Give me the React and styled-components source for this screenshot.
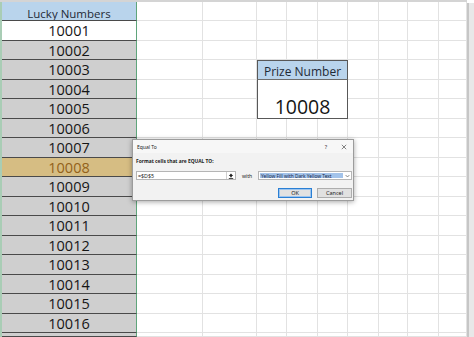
import React from "react";
import styled, { createGlobalStyle } from "styled-components";

const GlobalStyle = createGlobalStyle`
  html, body {
    margin: 0;
    padding: 0;
    background: #ffffff;
    overflow: hidden;
  }
  #root {
    width: 474px;
    height: 337px;
  }
`;

// strip, A, B ... J
const COLUMN_WIDTHS = [2, 135, 66, 54, 30, 31, 30, 31, 29, 31, 28];
const luckyNumbers = Array.from({ length: 16 }, (_, i) => 10001 + i);
const WINNER = 10008;

const Screen = styled.div`
  position: relative;
  display: flex;
  width: 474px;
  height: 337px;
  overflow: hidden;
  font-family: "Open Sans", "Liberation Sans", Arial, sans-serif;
  color: #1c1c1c;
`;

const Sheet = styled.div`
  flex: 1;
  display: grid;
  grid-template-columns: ${COLUMN_WIDTHS.map((w) => `${w}px`).join(" ")};
  grid-template-rows: 2px 19px repeat(16, 19.5px) 1fr;
`;

const TopStrip = styled.div`
  grid-column: 1 / -1;
  grid-row: 1;
  background: #d4d4d4;
`;

const SelectionEdge = styled.div`
  grid-column: 1;
  grid-row: 2 / -1;
  background: #a9cdb5;
`;

const tones = {
  header: { bg: "#b9d4ec", fg: "#1f2a36", size: "11.5px", pad: "0.5px" },
  white: { bg: "#ffffff", fg: "#161616", size: "14.5px", pad: "1px" },
  gray: { bg: "#cfcfcf", fg: "#161616", size: "14.5px", pad: "1px" },
  match: { bg: "#d6bd83", fg: "#93621a", size: "14.5px", pad: "1px" },
};

const ListCell = styled.div`
  box-sizing: border-box;
  display: flex;
  align-items: flex-end;
  justify-content: center;
  padding-bottom: ${(p) => tones[p.$tone].pad};
  background: ${(p) => tones[p.$tone].bg};
  color: ${(p) => tones[p.$tone].fg};
  font-size: ${(p) => tones[p.$tone].size};
  line-height: ${(p) => tones[p.$tone].size};
  font-weight: 500;
  border-bottom: 1px solid #4a4a4a;
  border-right: 1px solid #5fa57b;
  overflow: hidden;
`;

const EmptyCell = styled.div`
  box-sizing: border-box;
  border-right: 1px solid #e2e2e2;
  border-bottom: 1px solid #e2e2e2;
`;

const PrizeHead = styled.div`
  grid-column: 5 / 8;
  grid-row: 5;
  box-sizing: border-box;
  display: flex;
  align-items: flex-end;
  justify-content: center;
  padding-bottom: 1px;
  background: #b9d4ec;
  border: 1px solid #585858;
  border-bottom-color: #6d6d6d;
  font-size: 12px;
  line-height: 13px;
  font-weight: 500;
  color: #1f2a36;
`;

const PrizeValue = styled.div`
  grid-column: 5 / 8;
  grid-row: 6 / 8;
  box-sizing: border-box;
  display: flex;
  align-items: flex-end;
  justify-content: center;
  padding-bottom: 1px;
  background: #ffffff;
  border: 1px solid #585858;
  border-top: none;
  font-size: 19.5px;
  line-height: 20px;
  font-weight: 500;
  color: #151515;
`;

const Scrollbar = styled.div`
  width: 7px;
  margin-top: 3px;
  box-sizing: border-box;
  background: #e8e8e8;
  border-left: 2px solid #c6c6c6;
`;

/* ---- dialog ---- */

const Dialog = styled.div`
  position: absolute;
  left: 132px;
  top: 139px;
  width: 222px;
  height: 62px;
  box-sizing: border-box;
  display: flex;
  flex-direction: column;
  background: #f2f2f2;
  border: 1px solid #9c9c9c;
  box-shadow: 0 1px 5px rgba(0, 0, 0, 0.35);
  font-family: "Noto Sans", "Open Sans", sans-serif;
  color: #222222;
`;

const TitleBar = styled.div`
  height: 13px;
  display: flex;
  align-items: center;
  padding-left: 4px;
  background: #f7f7f7;
`;

const Title = styled.span`
  flex: 1;
  font-size: 5px;
  line-height: 6px;
`;

const TitleButton = styled.span`
  width: 18px;
  height: 13px;
  display: flex;
  align-items: center;
  justify-content: center;
  font-size: 5.5px;
  color: #333;
`;

const Body = styled.div`
  display: flex;
  flex-direction: column;
  padding: 0 1px 0 3px;
`;

const Prompt = styled.div`
  margin-top: 3px;
  height: 9px;
  display: flex;
  align-items: center;
  font-size: 4.9px;
  font-weight: 700;
`;

const FieldRow = styled.div`
  margin-top: 6px;
  height: 9px;
  display: flex;
  align-items: stretch;
`;

const RefInput = styled.div`
  width: 100px;
  box-sizing: border-box;
  display: flex;
  background: #ffffff;
  border: 1px solid #b5b5b5;
`;

const RefText = styled.span`
  flex: 1;
  display: flex;
  align-items: center;
  padding-left: 1px;
  font-size: 5.3px;
`;

const RefButton = styled.span`
  width: 8px;
  display: flex;
  align-items: center;
  justify-content: center;
  border-left: 1px solid #d0d0d0;
`;

const WithLabel = styled.span`
  width: 22px;
  display: flex;
  align-items: center;
  justify-content: center;
  font-size: 5px;
`;

const FormatSelect = styled.div`
  width: 94px;
  box-sizing: border-box;
  display: flex;
  padding: 1px 0 1px 1px;
  background: #ffffff;
  border: 1px solid #b5b5b5;
`;

const Highlight = styled.span`
  flex: 1;
  display: flex;
  align-items: center;
  padding-left: 1px;
  background: #a3c3ea;
  color: #17294a;
  font-size: 4.8px;
  white-space: nowrap;
  overflow: hidden;
`;

const Chevron = styled.span`
  width: 8px;
  display: flex;
  align-items: center;
  justify-content: center;
`;

const ButtonRow = styled.div`
  margin-top: 8px;
  height: 10px;
  display: flex;
  justify-content: flex-end;
  gap: 5px;
`;

const DialogButton = styled.span`
  width: ${(p) => (p.$wide ? "35px" : "34px")};
  box-sizing: border-box;
  display: flex;
  align-items: center;
  justify-content: center;
  background: #e1e1e1;
  border: 1px solid ${(p) => (p.$primary ? "#2a7fd4" : "#adadad")};
  box-shadow: ${(p) => (p.$primary ? "inset 0 0 0 1px #9cc4ee" : "none")};
  font-size: 5.5px;
`;

const CollapseIcon = () => (
  <svg width="6" height="6" viewBox="0 0 6 6">
    <path d="M3 0.5 L5.2 3 H3.8 V4.3 H2.2 V3 H0.8 Z" fill="#222" />
    <rect x="0.8" y="5" width="4.4" height="0.8" fill="#222" />
  </svg>
);

const ChevronIcon = () => (
  <svg width="5" height="4" viewBox="0 0 5 4">
    <path d="M0.6 1 L2.5 3 L4.4 1" fill="none" stroke="#444" strokeWidth="0.6" />
  </svg>
);

const CloseIcon = () => (
  <svg width="6" height="6" viewBox="0 0 6 6">
    <path d="M0.8 0.8 L5.2 5.2 M5.2 0.8 L0.8 5.2" stroke="#333" strokeWidth="0.6" />
  </svg>
);

const EqualToDialog = () => (
  <Dialog>
    <TitleBar>
      <Title>Equal To</Title>
      <TitleButton>?</TitleButton>
      <TitleButton>
        <CloseIcon />
      </TitleButton>
    </TitleBar>
    <Body>
      <Prompt>Format cells that are EQUAL TO:</Prompt>
      <FieldRow>
        <RefInput>
          <RefText>=$D$5</RefText>
          <RefButton>
            <CollapseIcon />
          </RefButton>
        </RefInput>
        <WithLabel>with</WithLabel>
        <FormatSelect>
          <Highlight>Yellow Fill with Dark Yellow Text</Highlight>
          <Chevron>
            <ChevronIcon />
          </Chevron>
        </FormatSelect>
      </FieldRow>
      <ButtonRow>
        <DialogButton $primary>OK</DialogButton>
        <DialogButton $wide>Cancel</DialogButton>
      </ButtonRow>
    </Body>
  </Dialog>
);

// rows 0..17 : header, 16 numbers, partial row at the bottom
const isPrizeArea = (row, col) => row >= 3 && row <= 5 && col >= 4 && col <= 6;

const App = () => {
  const rows = [];
  for (let r = 0; r < 18; r++) {
    let tone = "gray";
    let label = "";
    if (r === 0) {
      tone = "header";
      label = "Lucky Numbers";
    } else if (r <= 16) {
      const n = luckyNumbers[r - 1];
      label = n;
      tone = r === 1 ? "white" : n === WINNER ? "match" : "gray";
    }
    rows.push(
      <ListCell key={`a-${r}`} $tone={tone}>
        {label}
      </ListCell>
    );
    for (let c = 2; c <= 10; c++) {
      if (isPrizeArea(r, c + 1)) continue;
      rows.push(<EmptyCell key={`c-${r}-${c}`} />);
    }
  }

  return (
    <>
      <GlobalStyle />
      <Screen>
        <Sheet>
          <TopStrip />
          <SelectionEdge />
          <PrizeHead>Prize Number</PrizeHead>
          <PrizeValue>{WINNER}</PrizeValue>
          {rows}
        </Sheet>
        <Scrollbar />
        <EqualToDialog />
      </Screen>
    </>
  );
};

export default App;
